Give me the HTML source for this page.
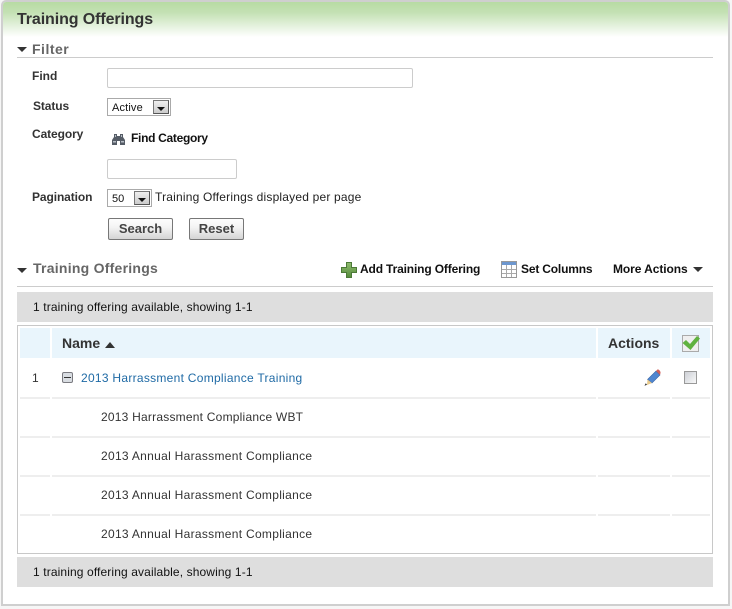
<!DOCTYPE html>
<html>
<head>
<meta charset="utf-8">
<style>
html,body{margin:0;padding:0;background:#fff;}
body{width:732px;height:609px;position:relative;overflow:hidden;font-family:"Liberation Sans",Arial,sans-serif;font-size:12px;color:#333;}
.a{position:absolute;white-space:nowrap;}
.b{font-weight:bold;}
.h{background:#e9f5fc;position:absolute;top:328px;height:30px;}
.d{background:#eeeeee;position:absolute;height:2px;}
.i{position:absolute;background:#fff;border:1px solid #ccc;border-radius:2px;box-sizing:border-box;}
.sel{position:absolute;border:1px solid #aaa;box-sizing:border-box;background:#fff;height:18px;}
.ar{position:absolute;right:1px;top:1px;width:16px;height:14px;box-sizing:border-box;border:1px solid #555;border-top-color:#777;border-left-color:#777;background:linear-gradient(#eee,#ccc);}
.ar:after{content:"";position:absolute;left:3px;top:6px;border:4px solid transparent;border-top:4px solid #111;border-bottom:0;}
.btn{position:absolute;top:218px;height:22px;box-sizing:border-box;border:1px solid #777;border-radius:2px;background:linear-gradient(#fdfdfd,#f4f4f4 40%,#d4d4d4);font-weight:bold;font-size:13px;color:#444;text-align:center;line-height:20px;}
.tri{position:absolute;width:0;height:0;border-left:5px solid transparent;border-right:5px solid transparent;border-top:5px solid #333;}
</style>
</head>
<body>
<div class="a" style="left:0;top:0;width:732px;height:609px;background:#f6f6f6"></div>
<div class="a" style="left:1px;top:0;width:729px;height:606px;box-sizing:border-box;border:2px solid #cfcfcf;border-radius:5px 5px 0 0;background:#fff"></div>
<div class="a" style="left:3px;top:2px;width:725px;height:35px;background:linear-gradient(#b7dba3,#c4e1b4 30%,#ffffff);border-radius:3px 3px 0 0"></div>
<div class="a b" style="left:17px;top:10px;font-size:16px;line-height:20px;color:#333;letter-spacing:-.1px">Training Offerings</div>

<div class="tri" style="left:17px;top:47px"></div>
<div class="a b" style="left:32px;top:41px;font-size:14px;line-height:16px;color:#666;letter-spacing:.5px">Filter</div>
<div class="a" style="left:17px;top:57px;width:696px;height:1px;background:#ccc"></div>

<div class="a b" style="left:32px;top:69px;line-height:14px">Find</div>
<div class="i" style="left:107px;top:68px;width:306px;height:20px"></div>

<div class="a b" style="left:33px;top:99px;line-height:14px;letter-spacing:-.1px">Status</div>
<div class="sel" style="left:107px;top:98px;width:64px;height:18px"><div class="a" style="left:4px;top:3px;font-size:11px;line-height:13px;color:#111;letter-spacing:.15px">Active</div><div class="ar"></div></div>

<div class="a b" style="left:32px;top:127px;line-height:14px;letter-spacing:-.1px">Category</div>
<svg class="a" style="left:112px;top:133px" width="13" height="13" viewBox="0 0 13 13"><path d="M2 1h3v2h3V1h3v3l2 3v5H8V8H5v4H0V7l2-3z" fill="#555c66"/><path d="M1 8h3v1.500H1zM9 8h3v1.500H9zM3 2h1v2H3zM9 2h1v2H9z" fill="#b5bcc4"/></svg>
<div class="a b" style="left:131px;top:131px;line-height:14px;color:#111;letter-spacing:-.3px">Find Category</div>
<div class="i" style="left:107px;top:159px;width:130px;height:20px"></div>

<div class="a b" style="left:32px;top:190px;line-height:14px;letter-spacing:-.1px">Pagination</div>
<div class="sel" style="left:107px;top:189px;width:45px;height:18px"><div class="a" style="left:4px;top:3px;font-size:11px;line-height:13px;color:#111">50</div><div class="ar"></div></div>
<div class="a" style="left:155px;top:190px;line-height:14px;color:#222;letter-spacing:.19px">Training Offerings displayed per page</div>

<div class="btn" style="left:108px;width:65px">Search</div>
<div class="btn" style="left:189px;width:55px">Reset</div>

<div class="tri" style="left:17px;top:268px"></div>
<div class="a b" style="left:33px;top:260px;font-size:14px;line-height:16px;color:#666;letter-spacing:.25px">Training Offerings</div>
<div class="a" style="left:17px;top:286px;width:696px;height:1px;background:#ccc"></div>

<svg class="a" style="left:341px;top:262px" width="16" height="16" viewBox="0 0 16 16"><defs><linearGradient id="g" x1="0" y1="0" x2="0" y2="1"><stop offset="0" stop-color="#8fbc6e"/><stop offset="1" stop-color="#558a3c"/></linearGradient></defs><path d="M5.500.5h5v5h5v5h-5v5h-5v-5h-5v-5h5z" fill="url(#g)" stroke="#4c7a38"/></svg>
<div class="a b" style="left:360px;top:262px;line-height:14px;color:#111;letter-spacing:-.15px">Add Training Offering</div>

<svg class="a" style="left:501px;top:261px" width="16" height="17" viewBox="0 0 16 17"><rect x=".5" y=".5" width="15" height="16" fill="#fff" stroke="#999"/><rect x="1" y="1" width="14" height="3" fill="#6d97cf"/><path d="M5.500 4v12M10.500 4v12M1 8.500h14M1 12.500h14" stroke="#a9a9a9"/></svg>
<div class="a b" style="left:521px;top:262px;line-height:14px;color:#111;letter-spacing:-.18px">Set Columns</div>
<div class="a b" style="left:613px;top:262px;line-height:14px;color:#111;letter-spacing:-.08px">More Actions</div>
<div class="tri" style="left:693px;top:267px"></div>

<div class="a" style="left:17px;top:292px;width:696px;height:30px;background:#dedede"></div>
<div class="a" style="left:33px;top:300px;line-height:14px;color:#111;letter-spacing:.12px">1 training offering available, showing 1-1</div>

<div class="a" style="left:17px;top:325px;width:696px;height:229px;box-sizing:border-box;border:1px solid #c8c8c8;background:#fff"></div>
<div class="h" style="left:20px;width:30px"></div>
<div class="h" style="left:52px;width:544px"></div>
<div class="h" style="left:598px;width:72px"></div>
<div class="h" style="left:672px;width:38px"></div>

<div class="a b" style="left:62px;top:335px;font-size:14px;line-height:16px;color:#333">Name</div>
<div class="a" style="left:105px;top:342px;width:0;height:0;border-left:5px solid transparent;border-right:5px solid transparent;border-bottom:6px solid #333"></div>
<div class="a b" style="left:608px;top:335px;font-size:14px;line-height:16px;color:#333">Actions</div>
<svg class="a" style="left:681px;top:333px" width="20" height="20" viewBox="0 0 20 20"><rect x="1.500" y="2.500" width="16" height="16" fill="#efefef" stroke="#aaa"/><path d="M1.500 10l3.500-3 4 4 7-8 3 2.500L9.500 17z" fill="#5fb23f"/></svg>

<div class="a" style="left:32px;top:371px;line-height:14px;color:#333">1</div>
<svg class="a" style="left:62px;top:372px" width="11" height="11" viewBox="0 0 11 11"><rect x=".5" y=".5" width="10" height="10" rx="1.500" fill="#d9dde2" stroke="#7a7a80"/><path d="M2 5.500h7" stroke="#333"/></svg>
<div class="a" style="left:81px;top:371px;line-height:14px;color:#1f6aa5;letter-spacing:.28px">2013 Harrassment Compliance Training</div>
<svg class="a" style="left:644px;top:369px" width="17" height="17" viewBox="0 0 17 17"><path d="M3.500 10.500L12 2l4 4-8 8z" fill="#4f86d0" stroke="#3a67a8" stroke-width=".6"/><path d="M12 2l1.500-1.500c1-.5 3.500 2 3 3.500L16 6z" fill="#d0605a"/><path d="M3.500 10.500l4.500 3.500-5 2z" fill="#e8c98a"/><path d="M.5 16.800l2.500-1-1.200-1.500z" fill="#222"/></svg>
<div class="a" style="left:684px;top:371px;width:13px;height:13px;box-sizing:border-box;border:1px solid #999;outline:0;background:linear-gradient(135deg,#cdd0d6,#f8f8f8)"></div>

<div class="d" style="left:20px;top:397px;width:30px"></div><div class="d" style="left:52px;top:397px;width:544px"></div><div class="d" style="left:598px;top:397px;width:72px"></div><div class="d" style="left:672px;top:397px;width:38px"></div>
<div class="d" style="left:20px;top:436px;width:30px"></div><div class="d" style="left:52px;top:436px;width:544px"></div><div class="d" style="left:598px;top:436px;width:72px"></div><div class="d" style="left:672px;top:436px;width:38px"></div>
<div class="d" style="left:20px;top:475px;width:30px"></div><div class="d" style="left:52px;top:475px;width:544px"></div><div class="d" style="left:598px;top:475px;width:72px"></div><div class="d" style="left:672px;top:475px;width:38px"></div>
<div class="d" style="left:20px;top:514px;width:30px"></div><div class="d" style="left:52px;top:514px;width:544px"></div><div class="d" style="left:598px;top:514px;width:72px"></div><div class="d" style="left:672px;top:514px;width:38px"></div>

<div class="a" style="left:101px;top:410px;line-height:14px;color:#333;letter-spacing:.22px">2013 Harrassment Compliance WBT</div>
<div class="a" style="left:101px;top:449px;line-height:14px;color:#333;letter-spacing:.3px">2013 Annual Harassment Compliance</div>
<div class="a" style="left:101px;top:488px;line-height:14px;color:#333;letter-spacing:.3px">2013 Annual Harassment Compliance</div>
<div class="a" style="left:101px;top:527px;line-height:14px;color:#333;letter-spacing:.3px">2013 Annual Harassment Compliance</div>

<div class="a" style="left:17px;top:557px;width:696px;height:30px;background:#dedede"></div>
<div class="a" style="left:33px;top:565px;line-height:14px;color:#111;letter-spacing:.12px">1 training offering available, showing 1-1</div>
</body>
</html>
